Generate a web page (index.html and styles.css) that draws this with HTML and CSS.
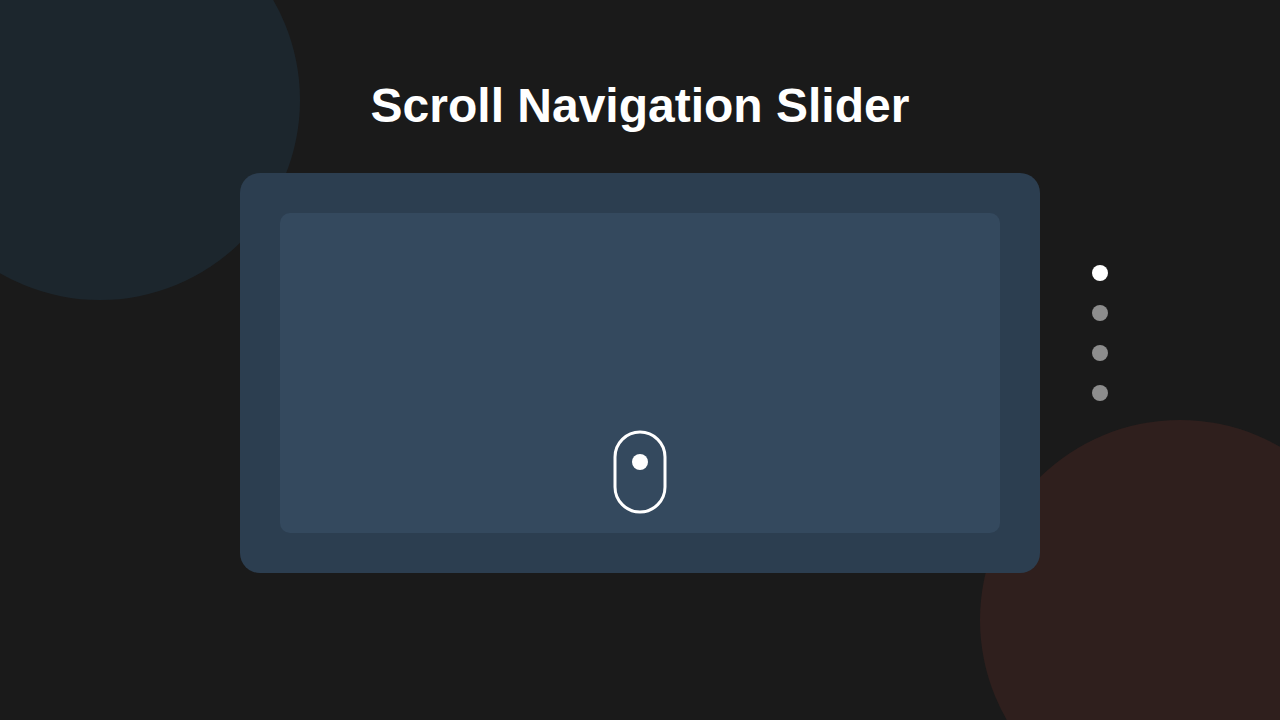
FILE: index.html
```html
<!DOCTYPE html>
<html lang="en">
<head>
  <meta charset="UTF-8">
  <meta name="viewport" content="width=device-width, initial-scale=1">
  <title>Scroll Navigation Slider</title>
  <link rel="stylesheet" href="styles.css">
</head>
<body>

  <div class="backdrop">
    <div class="circle circle-blue"></div>
    <div class="circle circle-red"></div>
  </div>

  <h1 class="title">Scroll Navigation Slider</h1>

  <main class="stage">
    <section class="slider">
      <div class="slide" id="slide-1">
        <!-- Scroll hint -->
        <svg class="mouse" viewBox="0 0 60 90" aria-hidden="true">
          <rect x="5" y="5" width="50" height="80" rx="25" fill="none" stroke="#fff" stroke-width="3"/>
          <circle cx="30" cy="35" r="8" fill="#fff"/>
        </svg>
      </div>
    </section>

    <nav class="dots" aria-label="Slides">
      <a class="dot active" href="#slide-1" aria-label="Slide 1"></a>
      <a class="dot" href="#slide-2" aria-label="Slide 2"></a>
      <a class="dot" href="#slide-3" aria-label="Slide 3"></a>
      <a class="dot" href="#slide-4" aria-label="Slide 4"></a>
    </nav>
  </main>

</body>
</html>
```

FILE: styles.css
```css
* {
  box-sizing: border-box;
}
body {
  margin: 0;
  padding-top: 78px;
  min-height: 100vh;
  position: relative;
  font-family: "Liberation Sans", Arial, sans-serif;
  background-color: #1a1a1a;
  color: #fff;
}
.title {
  margin: 0 0 39px;
  font-size: 48px;
  line-height: 56px;
  font-weight: bold;
  text-align: center;
}
.stage {
  display: grid;
  grid-template-columns: 1fr minmax(0, 800px) 1fr;
}
.slider {
  grid-column: 2;
  padding: 40px;
  border-radius: 20px;
  background: #2c3e50;
}
.slide {
  display: flex;
  justify-content: center;
  align-items: flex-end;
  min-height: 320px;
  padding-bottom: 16px;
  border-radius: 10px;
  background: #34495e;
}
.mouse {
  width: 60px;
  height: 90px;
}
.dots {
  display: flex;
  flex-direction: column;
  gap: 24px;
  padding: 92px 0 0 52px;
}
.dot {
  width: 16px;
  height: 16px;
  border-radius: 50%;
  background: #fff;
  opacity: 0.5;
}
.dot.active {
  opacity: 1;
}

/* background decoration */
.backdrop {
  position: absolute;
  inset: 0;
  z-index: -1;
  overflow: hidden;
}
.circle {
  position: absolute;
  width: 400px;
  height: 400px;
  border-radius: 50%;
  opacity: 0.1;
}
.circle-blue {
  top: -100px;
  left: -100px;
  background: #3498db;
}
.circle-red {
  right: -100px;
  bottom: -100px;
  background: #e74c3c;
}
```
